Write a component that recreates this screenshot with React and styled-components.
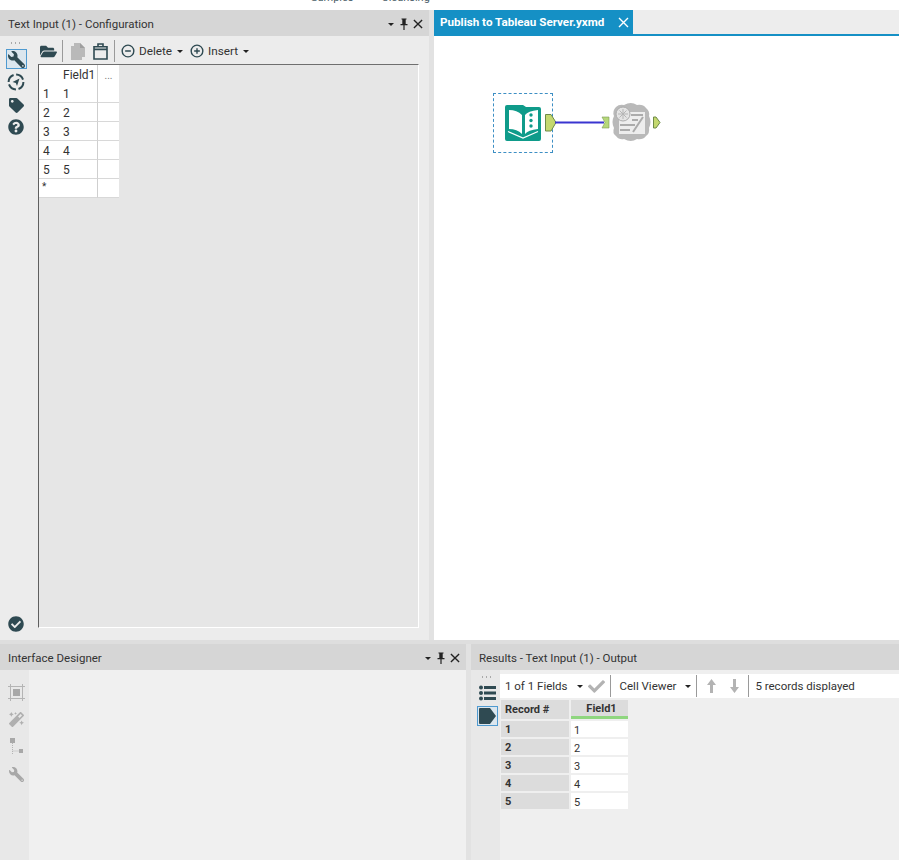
import React from "react";
import styled, { createGlobalStyle } from "styled-components";
import { FaWrench, FaTag, FaQuestionCircle, FaCheckCircle, FaFolderOpen, FaCheck, FaMagic } from "react-icons/fa";
import { FiMinusCircle, FiPlusCircle } from "react-icons/fi";

const Global = createGlobalStyle`
  html, body { margin: 0; padding: 0; background: #fff; }
  body { font-family: Roboto, "Open Sans", sans-serif; font-size: 12px; color: #2b2b2b; }
`;

const Page = styled.div`
  width: 899px;
  height: 860px;
  overflow: hidden;
  display: flex;
  flex-direction: column;
`;

const TopStrip = styled.div`
  height: 10px;
  flex: none;
  overflow: hidden;
  display: flex;
  gap: 28px;
  padding-left: 311px;
  color: #4f636c;
  font-size: 11px;
  line-height: 16px;
`;
const TopLabel = styled.span`
  margin-top: -10px;
`;

const UpperRow = styled.div`
  height: 630px;
  flex: none;
  display: flex;
`;
const LowerRow = styled.div`
  flex: 1;
  display: flex;
  background: #e6e6e6;
  border-top: 4px solid #dedede;
`;

const Panel = styled.div`
  width: ${(p) => p.$w}px;
  flex: none;
  display: flex;
  flex-direction: column;
  background: ${(p) => p.$bg || "#ececec"};
`;
const Splitter = styled.div`
  width: ${(p) => p.$w}px;
  flex: none;
  background: #e2e2e2;
`;
const PanelHeader = styled.div`
  height: 26px;
  flex: none;
  background: #d6d6d6;
  display: flex;
  align-items: center;
  justify-content: space-between;
  padding: 1px 6px 0 8px;
  box-sizing: border-box;
  font-size: 11.5px;
  color: #333;
`;
const HeaderTools = styled.div`
  display: flex;
  align-items: center;
  gap: 5px;
`;
const PanelBody = styled.div`
  flex: 1;
  display: flex;
  min-height: 0;
`;
const SideRail = styled.div`
  width: 29px;
  flex: none;
  display: flex;
  flex-direction: column;
  align-items: center;
  padding-top: ${(p) => p.$top || 0}px;
  padding-left: 3px;
  gap: ${(p) => p.$gap || 0}px;
  box-sizing: border-box;
  background: ${(p) => p.$bg || "transparent"};
`;
const Grip = styled.div`
  width: 11px;
  height: 2px;
  margin: 6px 0 5px;
  background: repeating-linear-gradient(90deg, #a9a9a9 0 1px, transparent 1px 4px);
`;
const RailButton = styled.div`
  width: 21px;
  height: 20px;
  box-sizing: border-box;
  display: flex;
  align-items: center;
  justify-content: center;
  color: ${(p) => p.$color || "#2f4a52"};
  border: 1px solid ${(p) => (p.$active ? "#4f9ad0" : "transparent")};
  background: ${(p) => (p.$active ? "#dbe6ee" : "transparent")};
  margin-bottom: ${(p) => p.$mb || 0}px;
`;
const RailBottom = styled.div`
  margin-top: auto;
  margin-bottom: 8px;
  color: #2f4a52;
  display: flex;
`;

const ConfigArea = styled.div`
  width: 381px;
  flex: none;
  margin-left: 9px;
  margin-bottom: 12px;
  display: flex;
  flex-direction: column;
`;
const ConfigToolbar = styled.div`
  height: 28px;
  flex: none;
  display: flex;
  align-items: center;
  padding: 2px 0 0 2px;
  box-sizing: border-box;
  color: #333;
  font-size: 11.75px;
`;
const ToolButton = styled.span`
  display: flex;
  align-items: center;
  color: ${(p) => p.$color || "#2f4a52"};
  margin-right: ${(p) => p.$mr || 0}px;
`;
const ToolSep = styled.span`
  width: 1px;
  height: 22px;
  background: #9a9a9a;
  margin: 0 ${(p) => p.$r || 6}px 0 ${(p) => p.$l || 6}px;
`;
const ToolLabel = styled.span`
  margin-left: 4px;
  color: #333;
`;
const Caret = styled.span`
  width: 0;
  height: 0;
  border-left: 3px solid transparent;
  border-right: 3px solid transparent;
  border-top: 3px solid ${(p) => p.$color || "#222"};
  margin: 1px ${(p) => p.$mr || 0}px 0 ${(p) => p.$ml || 6}px;
`;
const GridFrame = styled.div`
  flex: 1;
  background: #e6e6e6;
  border-top: 1px solid #6f6f6f;
  border-left: 1px solid #5f5f5f;
  border-right: 1px solid #fff;
  border-bottom: 1px solid #fff;
`;
const TextGrid = styled.div`
  display: grid;
  grid-template-columns: 19px 40px 21px;
  grid-auto-rows: 19px;
  width: 80px;
`;
const GridCell = styled.div`
  background: #fff;
  box-sizing: border-box;
  display: flex;
  align-items: center;
  padding-left: ${(p) => (p.$data ? 5 : 4)}px;
  padding-top: 1px;
  font-size: 12px;
  color: #333;
  border-right: ${(p) => (p.$data ? "1px solid #cfcfcf" : "none")};
  border-bottom: ${(p) => (p.$nobottom ? "none" : "1px solid #d8d8d8")};
`;
const MoreCell = styled(GridCell)`
  justify-content: center;
  padding-left: 0;
  font-size: 10px;
  color: #777;
`;
const NewRowCell = styled(GridCell)`
  font-size: 10px;
  padding: 0 0 3px 3px;
`;

const Canvas = styled.div`
  flex: 1;
  display: flex;
  flex-direction: column;
  background: #fff;
`;
const TabRow = styled.div`
  height: 24px;
  flex: none;
  display: flex;
  background: #ededed;
  border-bottom: 2px solid #1590c5;
`;
const Tab = styled.div`
  width: 199px;
  height: 26px;
  background: #1590c5;
  color: #fff;
  font-weight: 700;
  font-size: 11.65px;
  white-space: nowrap;
  display: flex;
  align-items: center;
  justify-content: space-between;
  padding: 0 4px 2px 6px;
  box-sizing: border-box;
`;
const WorkArea = styled.div`
  flex: 1;
  position: relative;
`;
const Selection = styled.div`
  position: absolute;
  left: 59px;
  top: 57px;
  width: 60px;
  height: 60px;
  box-sizing: border-box;
  border: 1px dashed #3d8fc4;
`;
const Flow = styled.svg`
  position: absolute;
  left: 60px;
  top: 59px;
`;

const ResultsArea = styled.div`
  flex: 1;
  display: flex;
  flex-direction: column;
  background: #efefef;
  min-width: 0;
`;
const ResultsBar = styled.div`
  height: 24px;
  flex: none;
  background: #fff;
  display: flex;
  align-items: center;
  padding-left: 5px;
  font-size: 11.5px;
  color: #333;
  margin-top: 4px;
`;
const ResultsTable = styled.div`
  display: grid;
  grid-template-columns: 68px 57px;
  column-gap: 2px;
  grid-template-rows: 21px repeat(5, 18px);
  margin-left: 1px;
  padding-top: 2px;
  width: 127px;
`;
const RecHead = styled.div`
  background: #dcdcdc;
  font-weight: 700;
  font-size: 11px;
  color: #333;
  display: flex;
  align-items: center;
  padding-left: 4px;
  justify-content: ${(p) => (p.$center ? "center" : "flex-start")};
  border-bottom: ${(p) => (p.$green ? "3px solid #8fd67f" : "none")};
  box-sizing: border-box;
  margin-bottom: 2px;
`;
const RecNum = styled.div`
  background: #dcdcdc;
  font-weight: 700;
  font-size: 11px;
  color: #333;
  display: flex;
  align-items: center;
  padding-left: 4px;
  margin-bottom: 2px;
`;
const RecValue = styled.div`
  background: #fff;
  font-size: 11px;
  color: #333;
  display: flex;
  align-items: center;
  padding: 2px 0 0 3px;
  margin-bottom: 2px;
`;

const CloseIcon = ({ size = 10, color = "#222", w = 1.5 }) => (
  <svg width={size} height={size} viewBox="0 0 11 11">
    <path d="M1 1 L10 10 M10 1 L1 10" stroke={color} strokeWidth={w} fill="none" />
  </svg>
);
const PinIcon = () => (
  <svg width="8" height="12" viewBox="0 0 8 12">
    <path d="M1.5 0.5 H6.5 V1.5 H5.7 V6 H7.5 V7.3 H4.6 V12 H3.4 V7.3 H0.5 V6 H2.3 V1.5 H1.5 Z" fill="#222" />
  </svg>
);
const PanelTools = () => (
  <HeaderTools>
    <Caret $ml={0} $mr={1} />
    <PinIcon />
    <CloseIcon />
  </HeaderTools>
);

const CopyIcon = () => (
  <svg width="14" height="17" viewBox="0 0 14 17">
    <path d="M3 0 H9 L14 5 V14 H11 V17 H0 V3 H3 Z" fill="#b9b9b9" />
    <path d="M9 0 V5 H14" fill="#9f9f9f" />
  </svg>
);
const PasteIcon = () => (
  <svg width="15" height="17" viewBox="0 0 15 17">
    <path d="M1 3.8 H14 V16 H1 Z M1 6.4 H14" fill="none" stroke="#2f4a52" strokeWidth="1.6" />
    <path d="M5 3.5 V1 H10 V3.5" fill="none" stroke="#2f4a52" strokeWidth="1.6" />
  </svg>
);
const PublishNavIcon = () => (
  <svg width="18" height="18" viewBox="0 0 18 18">
    <circle cx="9" cy="9" r="7.4" fill="none" stroke="#2f4a52" strokeWidth="2" strokeDasharray="9 2.6" />
    <path d="M12.5 5.5 L10 13 L8.8 10 L5.5 9 Z" fill="#2f4a52" />
  </svg>
);
const LayoutIcon = () => (
  <svg width="17" height="17" viewBox="0 0 17 17">
    <path d="M0 2.5 H17 M0 14.5 H17 M2.5 0 V17 M14.5 0 V17" stroke="#b4b4b4" strokeWidth="1" />
    <rect x="5" y="5" width="7" height="7" fill="#a8a8a8" />
  </svg>
);
const TreeIcon = () => (
  <svg width="15" height="18" viewBox="0 0 15 18">
    <rect x="1" y="0" width="5" height="5" fill="#a8a8a8" />
    <rect x="10" y="11" width="4" height="4" fill="#a8a8a8" />
    <path d="M3.5 5 V17 M3.5 13 H10" stroke="#b4b4b4" strokeWidth="1" strokeDasharray="1 1" />
  </svg>
);
const ListIcon = () => (
  <svg width="17" height="16" viewBox="0 0 17 16">
    <circle cx="2" cy="2.5" r="2" fill="#2f4a52" />
    <circle cx="2" cy="8" r="2" fill="#2f4a52" />
    <circle cx="2" cy="13.5" r="2" fill="#2f4a52" />
    <rect x="5" y="1" width="12" height="3" fill="#2f4a52" />
    <rect x="5" y="6.5" width="12" height="3" fill="#2f4a52" />
    <rect x="5" y="12" width="12" height="3" fill="#2f4a52" />
  </svg>
);
const OutputTagIcon = () => (
  <svg width="17" height="16" viewBox="0 0 17 16">
    <path d="M0 1 Q0 0 1 0 H11 L17 8 L11 16 H1 Q0 16 0 15 Z" fill="#2f4a52" />
  </svg>
);
const MoveArrow = ({ down }) => (
  <svg width="11" height="14" viewBox="0 0 11 14">
    <path d={down ? "M4 0 H7 V8 H10 L5.5 14 L1 8 H4 Z" : "M4 14 H7 V6 H10 L5.5 0 L1 6 H4 Z"} fill="#b3b3b3" />
  </svg>
);

const FlowDiagram = () => (
  <Flow width="180" height="50" viewBox="0 0 180 50">
    {/* text input tool */}
    <path d="M11 12 Q11 10 13 10 H29 L32 12 H45 Q47 12 47 14 V44 Q47 46 45 46 H13 Q11 46 11 44 Z" fill="#0f9b8a" />
    <path d="M15 15 Q23 15 28 20 V39 Q23 34 15 34 Z M31 20 Q34 16 44 15 V34 Q34 35 31 39 Z" fill="#fff" />
    <path d="M14 36.5 L29 43 L44 36.5" fill="none" stroke="#fff" strokeWidth="1.3" />
    <circle cx="37" cy="20" r="1.7" fill="#0f9b8a" />
    <circle cx="37" cy="25.5" r="1.7" fill="#0f9b8a" />
    <circle cx="37" cy="31" r="1.7" fill="#0f9b8a" />
    {/* anchor out */}
    <path d="M51.5 19.5 H57 L62 27.5 L57 36 H51.5 Z" fill="#c4d86f" stroke="#6e8a48" strokeWidth="1" />
    <path d="M61 27.5 H110" stroke="#3a35d0" strokeWidth="2" />
    {/* anchor in */}
    <path d="M108 22 H115 V33 H108 L111 27.5 Z" fill="#b6d87a" stroke="#7c9a55" strokeWidth="0.6" />
    {/* publish tool */}
    <path d="M122 12 Q125 9 130 10 Q137 6 143 10 Q149 9 152 13 Q156 16 155 21 Q158 27 155 33 Q156 38 152 41 Q149 45 143 44 Q137 48 130 44 Q125 45 122 41 Q118 38 120 33 Q117 27 120 21 Q118 16 122 12 Z" fill="#b9b9b9" />
    <path d="M125 17 H151 V39 H125 Z" fill="#ededed" />
    <circle cx="129" cy="19" r="7" fill="#e4e4e4" stroke="#ababab" strokeWidth="1" />
    <path d="M124 19 H134 M129 14 V24 M125.5 15.5 L132.5 22.5 M132.5 15.5 L125.5 22.5" stroke="#b5b5b5" strokeWidth="1" />
    <path d="M137 20 H149 M138 25 H144 M126 30 H141 M126 35 H136" stroke="#ababab" strokeWidth="2.2" />
    <path d="M149 22 L139 37" stroke="#ababab" strokeWidth="2" />
    {/* output anchor */}
    <path d="M159.5 22 H162 L166 27.5 L162 33 H159.5 Z" fill="#c4d86f" stroke="#6e8a48" strokeWidth="1" />
  </Flow>
);

const rows = ["1", "2", "3", "4", "5"];

export default function App() {
  return (
    <Page>
      <Global />
      <TopStrip>
        <TopLabel>Samples</TopLabel>
        <TopLabel>Cleansing</TopLabel>
      </TopStrip>
      <UpperRow>
        <Panel $w={429}>
          <PanelHeader>
            <span>Text Input (1) - Configuration</span>
            <PanelTools />
          </PanelHeader>
          <PanelBody>
            <SideRail>
              <Grip />
              <RailButton $active $mb={3}><FaWrench size={17} style={{ transform: "scaleX(-1)" }} /></RailButton>
              <RailButton $mb={3}><PublishNavIcon /></RailButton>
              <RailButton $mb={2}><FaTag size={15} /></RailButton>
              <RailButton><FaQuestionCircle size={16} /></RailButton>
              <RailBottom><FaCheckCircle size={16} /></RailBottom>
            </SideRail>
            <ConfigArea>
              <ConfigToolbar>
                <ToolButton><FaFolderOpen size={17} /></ToolButton>
                <ToolSep $l={5} $r={8} />
                <ToolButton $mr={8}><CopyIcon /></ToolButton>
                <PasteIcon />
                <ToolSep $l={6} $r={6} />
                <ToolButton><FiMinusCircle size={14} strokeWidth={2.4} /></ToolButton>
                <ToolLabel>Delete</ToolLabel>
                <Caret $ml={5} $mr={7} />
                <ToolButton><FiPlusCircle size={14} strokeWidth={2.4} /></ToolButton>
                <ToolLabel>Insert</ToolLabel>
                <Caret $ml={5} />
              </ConfigToolbar>
              <GridFrame>
                <TextGrid>
                  <GridCell $nobottom />
                  <GridCell $data $nobottom>Field1</GridCell>
                  <MoreCell $nobottom>...</MoreCell>
                  {rows.map((r) => (
                    <React.Fragment key={r}>
                      <GridCell>{r}</GridCell>
                      <GridCell $data>{r}</GridCell>
                      <GridCell />
                    </React.Fragment>
                  ))}
                  <NewRowCell>*</NewRowCell>
                  <GridCell $data />
                  <GridCell />
                </TextGrid>
              </GridFrame>
            </ConfigArea>
          </PanelBody>
        </Panel>
        <Splitter $w={5} />
        <Canvas>
          <TabRow>
            <Tab>
              <span>Publish to Tableau Server.yxmd</span>
              <CloseIcon size={11} color="#fff" w={1.4} />
            </Tab>
          </TabRow>
          <WorkArea>
            <Selection />
            <FlowDiagram />
          </WorkArea>
        </Canvas>
      </UpperRow>
      <LowerRow>
        <Panel $w={466} $bg="#f0f0f0">
          <PanelHeader>
            <span>Interface Designer</span>
            <PanelTools />
          </PanelHeader>
          <PanelBody>
            <SideRail $top={12} $gap={7.5} $bg="#e8e8e8">
              <RailButton><LayoutIcon /></RailButton>
              <RailButton $color="#b0b0b0"><FaMagic size={15} /></RailButton>
              <RailButton><TreeIcon /></RailButton>
              <RailButton $color="#a8a8a8"><FaWrench size={15} style={{ transform: "scaleX(-1)" }} /></RailButton>
            </SideRail>
          </PanelBody>
        </Panel>
        <Splitter $w={5} />
        <Panel $w={428} $bg="#e8e8e8">
          <PanelHeader>
            <span>Results - Text Input (1) - Output</span>
          </PanelHeader>
          <PanelBody>
            <SideRail>
              <Grip />
              <RailButton $mb={3}><ListIcon /></RailButton>
              <RailButton $active><OutputTagIcon /></RailButton>
            </SideRail>
            <ResultsArea>
              <ResultsBar>
                <span>1 of 1 Fields</span>
                <Caret $ml={9} $mr={5} />
                <ToolButton $color="#b3b3b3"><FaCheck size={17} /></ToolButton>
                <ToolSep $l={5} $r={9} />
                <span>Cell Viewer</span>
                <Caret $ml={9} $mr={4} />
                <ToolSep $l={1} $r={9} />
                <ToolButton $mr={12}><MoveArrow /></ToolButton>
                <ToolButton><MoveArrow down /></ToolButton>
                <ToolSep $l={8} $r={6} />
                <span>5 records displayed</span>
              </ResultsBar>
              <ResultsTable>
                <RecHead>Record #</RecHead>
                <RecHead $center $green>Field1</RecHead>
                {rows.map((r) => (
                  <React.Fragment key={r}>
                    <RecNum>{r}</RecNum>
                    <RecValue>{r}</RecValue>
                  </React.Fragment>
                ))}
              </ResultsTable>
            </ResultsArea>
          </PanelBody>
        </Panel>
      </LowerRow>
    </Page>
  );
}
